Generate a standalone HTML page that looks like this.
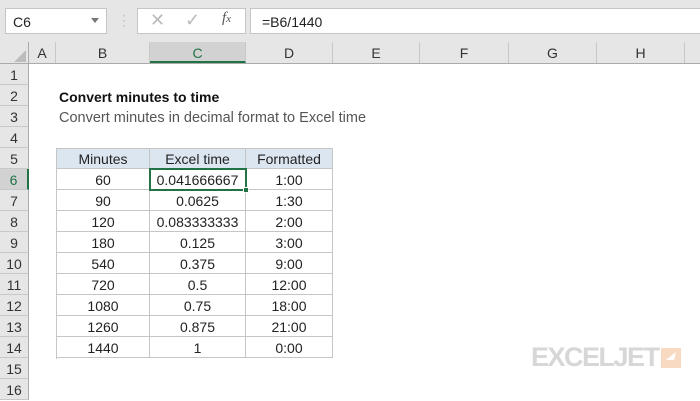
<!DOCTYPE html>
<html><head><meta charset="utf-8"><style>
*{margin:0;padding:0;box-sizing:border-box}
body{width:700px;height:400px;overflow:hidden;background:#fff;font-family:"Liberation Sans",Calibri,sans-serif;position:relative;font-size:13px;color:#222}
.a{position:absolute}
.top{left:0;top:0;width:700px;height:42px;background:#e6e6e6}
.box{background:#fff;border:1px solid #c6c6c6}
.colh{top:42px;height:22px;background:#e6e6e6;border-bottom:1px solid #ababab}
.ch{top:42px;height:21px;line-height:22px;text-align:center;border-right:1px solid #c8c8c8;font-size:14px;color:#333}
.rh{left:0;width:29px;height:21px;line-height:22px;text-align:center;background:#e6e6e6;border-bottom:1px solid #c8c8c8;border-right:1px solid #ababab;font-size:14px;color:#333}
.c{height:21px;line-height:22px;text-align:center;border-right:1px solid #c6c6c6;border-bottom:1px solid #c6c6c6;font-size:14px;color:#222}
</style></head><body>
<div class="a top"></div>
<div class="a box" style="left:5px;top:8px;width:102px;height:26px;padding:5px 0 0 7px;font-size:14px">C6</div>
<div class="a" style="left:91px;top:18px;width:0;height:0;border-left:4px solid transparent;border-right:4px solid transparent;border-top:5px solid #777"></div>
<div class="a" style="left:122px;top:13px;color:#aaa;font-size:12px;line-height:5px">·<br>·<br>·</div>
<div class="a box" style="left:137px;top:8px;width:109px;height:26px"></div>
<div class="a" style="left:150px;top:10px;color:#bbb;font-size:18px">✕</div>
<div class="a" style="left:185px;top:10px;color:#bbb;font-size:18px">✓</div>
<div class="a" style="left:222px;top:10px;color:#555;font-size:15px;font-style:italic;font-family:'Liberation Serif',serif">f<span style="font-size:11px">x</span></div>
<div class="a box" style="left:250px;top:8px;width:460px;height:26px;padding:5px 0 0 11px;font-size:14px">=B6/1440</div>
<div class="a colh" style="left:0;width:700px"></div>
<div class="a" style="left:0;top:42px;width:29px;height:22px;border-right:1px solid #ababab"></div>
<div class="a" style="left:14px;top:50px;width:0;height:0;border-left:12px solid transparent;border-bottom:12px solid #bdbdbd"></div>
<div class="a ch" style="left:29px;width:27px">A</div>
<div class="a ch" style="left:56px;width:94px">B</div>
<div class="a ch" style="left:150px;width:96px;background:#d2d2d2;border-bottom:2px solid #217346;color:#217346">C</div>
<div class="a ch" style="left:246px;width:87px">D</div>
<div class="a ch" style="left:333px;width:87px">E</div>
<div class="a ch" style="left:420px;width:89px">F</div>
<div class="a ch" style="left:509px;width:88px">G</div>
<div class="a ch" style="left:597px;width:88px">H</div>
<div class="a rh" style="top:64px">1</div><div class="a rh" style="top:85px">2</div><div class="a rh" style="top:106px">3</div><div class="a rh" style="top:127px">4</div><div class="a rh" style="top:148px">5</div>
<div class="a rh" style="top:169px;background:#d2d2d2;color:#217346;border-right:2px solid #217346">6</div>
<div class="a rh" style="top:190px">7</div><div class="a rh" style="top:211px">8</div><div class="a rh" style="top:232px">9</div><div class="a rh" style="top:253px">10</div><div class="a rh" style="top:274px">11</div><div class="a rh" style="top:295px">12</div><div class="a rh" style="top:316px">13</div><div class="a rh" style="top:337px">14</div><div class="a rh" style="top:358px">15</div><div class="a rh" style="top:379px">16</div>
<div class="a" style="left:59px;top:89px;font-weight:bold;font-size:14px;color:#111">Convert minutes to time</div>
<div class="a" style="left:59px;top:110px;font-size:14.5px;color:#555">Convert minutes in decimal format to Excel time</div>
<div class="a" style="left:56px;top:148px;width:277px;height:211px;border-left:1px solid #c6c6c6;border-top:1px solid #c6c6c6"></div>
<div class="a" style="left:57px;top:149px;width:276px;height:20px;background:#dce6f1"></div>
<div class="a" style="left:57px;top:148px;width:276px">
<div style="display:flex"><div class="c" style="width:93px">Minutes</div><div class="c" style="width:96px">Excel time</div><div class="c" style="width:87px">Formatted</div></div>
<div style="display:flex"><div class="c" style="width:93px">60</div><div class="c" style="width:96px">0.041666667</div><div class="c" style="width:87px">1:00</div></div>
<div style="display:flex"><div class="c" style="width:93px">90</div><div class="c" style="width:96px">0.0625</div><div class="c" style="width:87px">1:30</div></div>
<div style="display:flex"><div class="c" style="width:93px">120</div><div class="c" style="width:96px">0.083333333</div><div class="c" style="width:87px">2:00</div></div>
<div style="display:flex"><div class="c" style="width:93px">180</div><div class="c" style="width:96px">0.125</div><div class="c" style="width:87px">3:00</div></div>
<div style="display:flex"><div class="c" style="width:93px">540</div><div class="c" style="width:96px">0.375</div><div class="c" style="width:87px">9:00</div></div>
<div style="display:flex"><div class="c" style="width:93px">720</div><div class="c" style="width:96px">0.5</div><div class="c" style="width:87px">12:00</div></div>
<div style="display:flex"><div class="c" style="width:93px">1080</div><div class="c" style="width:96px">0.75</div><div class="c" style="width:87px">18:00</div></div>
<div style="display:flex"><div class="c" style="width:93px">1260</div><div class="c" style="width:96px">0.875</div><div class="c" style="width:87px">21:00</div></div>
<div style="display:flex"><div class="c" style="width:93px">1440</div><div class="c" style="width:96px">1</div><div class="c" style="width:87px">0:00</div></div>
</div>
<div class="a" style="left:149px;top:168px;width:98px;height:23px;border:2px solid #217346"></div>
<div class="a" style="left:243px;top:187px;width:6px;height:6px;background:#217346;border:1px solid #fff"></div>
<div class="a" style="left:531px;top:342px;font-size:27px;font-weight:bold;color:#d7d7d7;letter-spacing:-1.5px;line-height:30px">EXCELJET</div>
<div class="a" style="left:661px;top:348px;width:20px;height:20px;background:#f8d9c2"></div>
<svg class="a" style="left:661px;top:348px" width="20" height="20"><path d="M15 4 L5 12 L13 12 Z" fill="#fff"/></svg>
</body></html>
